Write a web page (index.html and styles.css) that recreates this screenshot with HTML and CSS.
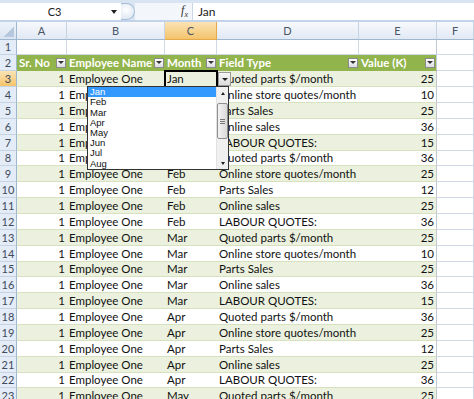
FILE: index.html
```html
<!DOCTYPE html>
<html lang="en">

<head>
    <meta charset="UTF-8">
    <meta name="viewport" content="width=device-width, initial-scale=1.0">
    <title>Sheet</title>
    <link rel="stylesheet" href="styles.css">
</head>

<body>

    <div class="formula-bar">
        <div class="name-box">
            <span class="name-text">C3</span>
            <span class="name-arrow"></span>
        </div>
        <div class="knob"></div>
        <div class="fx-zone"><span class="fx"><i>f</i><sub>x</sub></span></div>
        <div class="formula">Jan</div>
    </div>

    <div class="sheet" id="sheet">
        <div class="corner"><span class="corner-tri"></span></div>
        <div class="ch">A</div>
        <div class="ch">B</div>
        <div class="ch active-col">C</div>
        <div class="ch">D</div>
        <div class="ch">E</div>
        <div class="ch">F</div>
    </div>

    <script>
        const fields = ['Quoted parts $/month', 'Online store quotes/month', 'Parts Sales', 'Online sales', 'LABOUR QUOTES:'];
const months = ['Jan', 'Feb', 'Mar', 'Apr', 'May'];
const values = [25, 10, 25, 36, 15, 36, 25, 12, 25, 36, 25, 10, 25, 36, 15, 36, 25, 12, 25, 36, 25];
const listMonths = ['Jan', 'Feb', 'Mar', 'Apr', 'May', 'Jun', 'Jul', 'Aug'];

const sheet = document.getElementById('sheet');

function cell(cls, html) {
    const div = document.createElement('div');
    div.className = cls;
    div.innerHTML = html || '';
    sheet.appendChild(div);
    return div;
}

// row 1: empty
cell('rh', '1');
for (let i = 0; i < 6; i++) cell('c');

// row 2: table header
cell('rh', '2');
['Sr. No', 'Employee Name', 'Month', 'Field Type', 'Value (K)'].forEach(h => {
    cell('c th', `<span>${h}</span><span class="fb"></span>`);
});
cell('c');

// rows 3..23
values.forEach((val, i) => {
    const r = i + 3;
    const band = r % 2 === 1 ? ' band' : '';
    cell('rh' + (r === 3 ? ' active-row' : ''), r);
    cell('c td num' + band, '1');
    cell('c td' + band, 'Employee One');
    const month = cell('c td' + band + (r === 3 ? ' active' : ''), months[Math.floor(i / 5)]);
    cell('c td' + band, fields[i % 5]);
    cell('c td num' + band, val);
    cell('c');

    if (r === 3) {
        const items = listMonths.map((m, k) =>
            `<div class="opt${k === 0 ? ' sel' : ''}">${m}</div>`).join('');
        month.innerHTML += `
            <span class="dv-btn"></span>
            <div class="dv-list">
                <div class="dv-items">${items}</div>
                <div class="dv-scroll">
                    <span class="sc-up"></span>
                    <span class="sc-thumb"><i></i><i></i><i></i></span>
                    <span class="sc-down"></span>
                </div>
            </div>`;
    }
});

    </script>
</body>

</html>
```

FILE: styles.css
```css
body {
    margin: 0;
    padding: 0;
    background-color: #fff;
    font-family: Lato, "Liberation Sans", sans-serif;
    overflow: hidden;
}

.formula-bar {
    display: flex;
    height: 17px;
    padding-top: 3px;
    background-color: #d9e4f2;
    border-bottom: 2px solid #c3d4ea;
}

.name-box {
    width: 121px;
    display: flex;
    align-items: center;
    background-color: #fff;
}

.name-text {
    flex: 1;
    text-align: center;
    font-size: 11px;
    color: #222;
    padding-right: 2px;
}

.name-arrow {
    width: 0;
    height: 0;
    margin-right: 4px;
    border-left: 3px solid transparent;
    border-right: 3px solid transparent;
    border-top: 4px solid #222;
}

.knob {
    width: 13px;
    height: 15px;
    border: 1px solid #a7bdd7;
    border-left: 0;
    border-radius: 0 9px 9px 0;
    background: radial-gradient(circle at 40% 40%, #ffffff, #d6e2f1);
}

.fx-zone {
    width: 53px;
    display: flex;
    align-items: center;
    justify-content: flex-end;
    padding-right: 4px;
    background-color: #f3f6fb;
    border-right: 1px solid #c8d6e8;
}

.fx {
    font-family: "Liberation Serif", serif;
    font-size: 12px;
    color: #333;
}

.fx sub {
    font-size: 8px;
    font-style: italic;
}

.formula {
    flex: 1;
    display: flex;
    align-items: center;
    padding-left: 5px;
    background-color: #fff;
    font-size: 12px;
    color: #222;
}

.sheet {
    display: grid;
    grid-template-columns: 17px 50px 98px 52px 142px 78px 1fr;
    grid-template-rows: 17.5px;
    grid-auto-rows: 15.86px;
}

.corner {
    display: flex;
    align-items: flex-end;
    justify-content: flex-end;
    padding: 0 2px 2px 0;
    background: linear-gradient(#eef3fa, #dae4f1);
    border-right: 1px solid #9eb6ce;
    border-bottom: 1px solid #9eb6ce;
}

.corner-tri {
    width: 10px;
    height: 10px;
    background: linear-gradient(135deg, transparent 50%, #b6c8de 50%);
}

.ch {
    display: flex;
    align-items: center;
    justify-content: center;
    font-size: 11px;
    color: #4a5566;
    background: linear-gradient(#f7f9fc, #e1e9f4);
    border-right: 1px solid #c5d3e3;
    border-bottom: 1px solid #9eb6ce;
}

.ch.active-col {
    background: linear-gradient(#fbe3b4, #f4c46c);
    border-right-color: #e3a94b;
    border-bottom-color: #e3a94b;
}

.rh {
    display: flex;
    align-items: center;
    justify-content: center;
    font-size: 11px;
    color: #3d4a5c;
    background-color: #e4ecf7;
    border-right: 1px solid #9eb6ce;
    border-bottom: 1px solid #c5d3e3;
}

.rh.active-row {
    background: linear-gradient(#fbe3b4, #f4c46c);
}

.c {
    display: flex;
    align-items: center;
    padding: 0 2px;
    font-size: 11.5px;
    color: #111;
    white-space: nowrap;
    overflow: hidden;
    border-right: 1px solid #d0d7e5;
    border-bottom: 1px solid #d0d7e5;
}

.th {
    background-color: #92b44c;
    color: #fff;
    font-weight: bold;
    border-right: 0;
    border-bottom: 1px solid #92b44c;
    justify-content: space-between;
    padding-right: 1px;
}

.fb {
    flex: none;
    width: 8px;
    height: 8px;
    border: 1px solid #8a8a8a;
    background: linear-gradient(#ffffff, #dadde2);
    display: flex;
    align-items: center;
    justify-content: center;
}

.fb::after {
    content: "";
    border-left: 3px solid transparent;
    border-right: 3px solid transparent;
    border-top: 3px solid #333;
}

.td {
    border-right: 0;
    border-bottom: 1px solid #d6e2bd;
}

.td.band {
    background-color: #ebf1de;
}

.td.num {
    justify-content: flex-end;
}

.c:nth-child(7n+6) {
    border-right: 1px solid #c0c8d4;
}

.active {
    position: relative;
    overflow: visible;
    outline: 2px solid #000;
    outline-offset: -1px;
    z-index: 2;
}

.dv-btn {
    position: absolute;
    left: 53px;
    top: 1px;
    width: 11px;
    height: 12px;
    border: 1px solid #9a9a9a;
    background: linear-gradient(#f6f6f6, #dcdcdc);
    display: flex;
    align-items: center;
    justify-content: center;
}

.dv-btn::after {
    content: "";
    border-left: 3px solid transparent;
    border-right: 3px solid transparent;
    border-top: 3px solid #222;
}

.dv-list {
    position: absolute;
    left: -78px;
    top: 15px;
    width: 140px;
    height: 82px;
    display: flex;
    background-color: #fff;
    border: 1px solid #333;
    font-family: "Liberation Sans", Arial, sans-serif;
    font-size: 9.5px;
    color: #111;
}

.dv-items {
    flex: 1;
}

.opt {
    height: 10.2px;
    line-height: 10.2px;
    padding-left: 2px;
}

.opt.sel {
    background-color: #3399ff;
    color: #fff;
}

.dv-scroll {
    width: 11px;
    display: flex;
    flex-direction: column;
    align-items: center;
    background-color: #f0f0f0;
    border-left: 1px solid #e2e2e2;
}

.sc-up,
.sc-down {
    height: 0;
    margin: 5px 0 4px;
    border-left: 2px solid transparent;
    border-right: 2px solid transparent;
}

.sc-up {
    border-bottom: 3px solid #222;
}

.sc-down {
    margin-top: auto;
    margin-bottom: 4px;
    border-top: 3px solid #222;
}

.sc-thumb {
    width: 9px;
    height: 34px;
    margin-top: 4px;
    border: 1px solid #8e8f8f;
    border-radius: 2px;
    background: linear-gradient(90deg, #f3f3f3, #d9d9d9);
    display: flex;
    flex-direction: column;
    align-items: center;
    justify-content: center;
    gap: 1px;
}

.sc-thumb i {
    width: 5px;
    height: 1px;
    background-color: #777;
}
```
